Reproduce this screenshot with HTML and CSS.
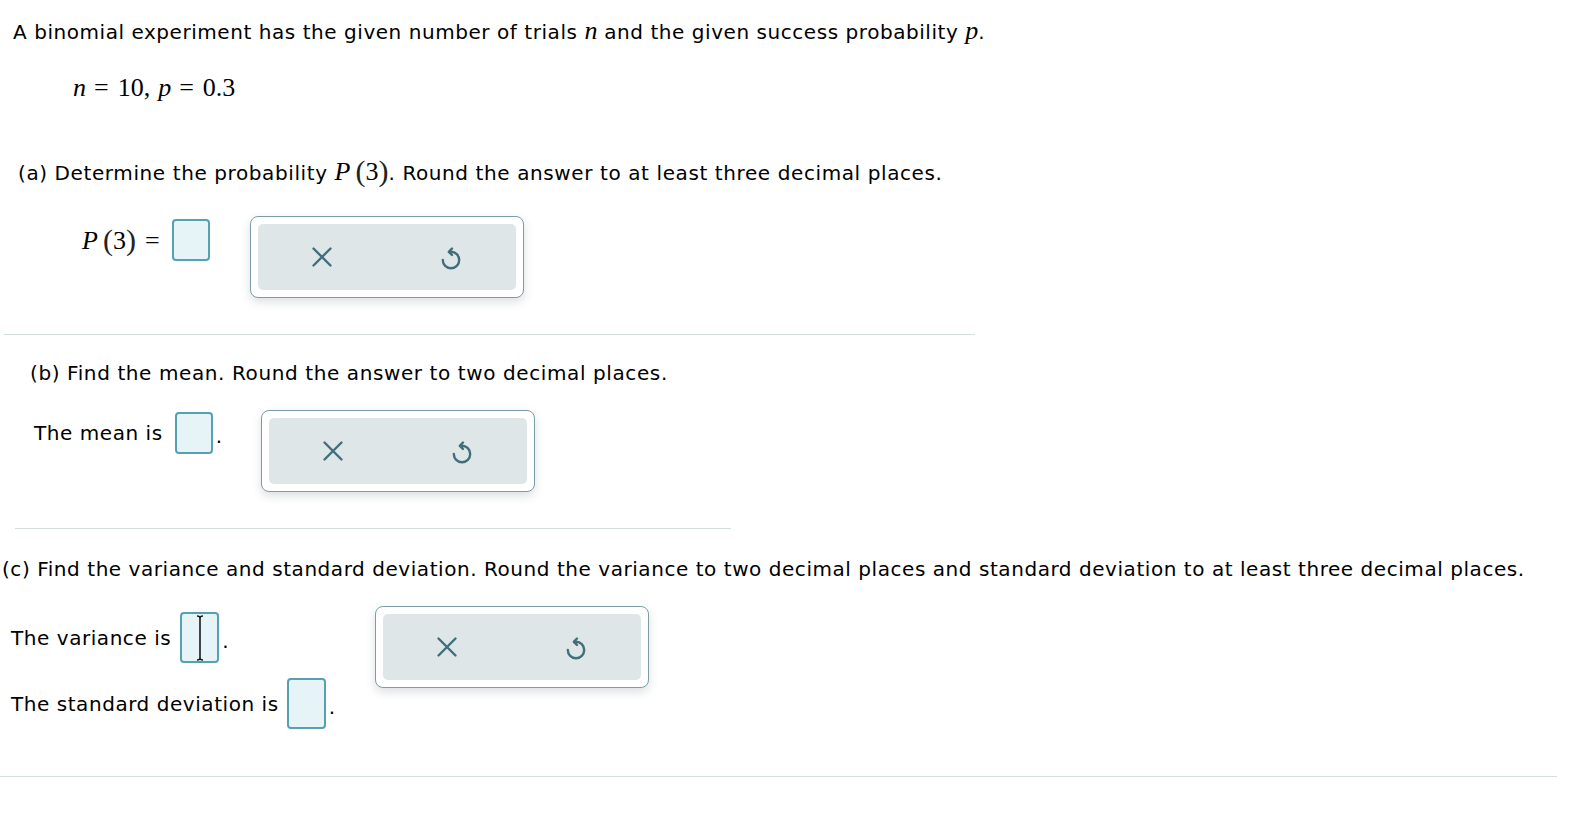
FILE: index.html
```html
<!DOCTYPE html>
<html lang="en">
<head>
<meta charset="utf-8">
<title>Binomial experiment</title>
<link rel="stylesheet" href="styles.css">
</head>
<body>
<div class="page">
  <p class="intro">A binomial experiment has the given number of trials <i class="mv">n</i> and the given success probability <i class="mv">p</i>.</p>
  <div class="given"><i>n</i><span class="rel">=</span>10,<span class="sp"></span><i>p</i><span class="rel">=</span>0.3</div>

  <p class="q q-a">(a) Determine the probability <span class="m"><i>P</i><span class="paren">(</span>3<span class="paren">)</span></span>. Round the answer to at least three decimal places.</p>
  <div class="row row-a">
    <div class="ans ans-a">
      <span class="m big"><i>P</i><span class="paren">(</span>3<span class="paren">)</span><span class="rel">=</span></span>
      <span class="box"></span>
    </div>
    <div class="tools">
      <div class="tools-in">
        <span class="tbtn"><svg width="24" height="24" viewBox="0 0 24 24"><path d="M3.5 3.5 L20.5 20.5 M20.5 3.5 L3.5 20.5" /></svg></span>
        <span class="tbtn"><svg width="24" height="26" viewBox="0 0 24 26"><path d="M3.8 16 A8.2 8.2 0 1 0 12 7.8 H10.5 M13 4.5 L9.8 7.8 L13 11" /></svg></span>
      </div>
    </div>
  </div>
  <div class="rule rule-1"></div>

  <p class="q q-b">(b) Find the mean. Round the answer to two decimal places.</p>
  <div class="row row-b">
    <div class="ans ans-b">
      <span>The mean is</span><span class="box"></span><span class="dot">.</span>
    </div>
    <div class="tools">
      <div class="tools-in">
        <span class="tbtn"><svg width="24" height="24" viewBox="0 0 24 24"><path d="M3.5 3.5 L20.5 20.5 M20.5 3.5 L3.5 20.5" /></svg></span>
        <span class="tbtn"><svg width="24" height="26" viewBox="0 0 24 26"><path d="M3.8 16 A8.2 8.2 0 1 0 12 7.8 H10.5 M13 4.5 L9.8 7.8 L13 11" /></svg></span>
      </div>
    </div>
  </div>
  <div class="rule rule-2"></div>

  <p class="q q-c">(c) Find the variance and standard deviation. Round the variance to two decimal places and standard deviation to at least three decimal places.</p>
  <div class="row row-c">
    <div class="ans-col">
      <div class="ans ans-var">
        <span>The variance is</span><span class="box box-tall"><svg class="ibeam" width="10" height="48" viewBox="0 0 10 48"><path d="M2 2 Q5 2 5 4 Q5 2 8 2 M5 4 V44 M2 46 Q5 46 5 44 Q5 46 8 46" /></svg></span><span class="dot">.</span>
      </div>
      <div class="ans ans-sd">
        <span>The standard deviation is</span><span class="box box-tall"></span><span class="dot">.</span>
      </div>
    </div>
    <div class="tools">
      <div class="tools-in">
        <span class="tbtn"><svg width="24" height="24" viewBox="0 0 24 24"><path d="M3.5 3.5 L20.5 20.5 M20.5 3.5 L3.5 20.5" /></svg></span>
        <span class="tbtn"><svg width="24" height="26" viewBox="0 0 24 26"><path d="M3.8 16 A8.2 8.2 0 1 0 12 7.8 H10.5 M13 4.5 L9.8 7.8 L13 11" /></svg></span>
      </div>
    </div>
  </div>
  <div class="rule rule-3"></div>
</div>
</body>
</html>
```

FILE: styles.css
```css
html, body {
  margin: 0;
  padding: 0;
  background: #fff;
}

body {
  font-family: "DejaVu Sans", Verdana, sans-serif;
  font-size: 20px;
  letter-spacing: 0.6px;
  color: #000;
}

.page {
  display: flex;
  flex-direction: column;
  align-items: flex-start;
}

p { margin: 0; }

.intro {
  padding: 20px 0 0 13px;
  line-height: 24px;
  letter-spacing: 0.55px;
}

.mv {
  font-family: "Liberation Serif", "Times New Roman", serif;
  font-size: 26px;
  line-height: 20px;
  letter-spacing: 0;
}

.given {
  margin: 29px 0 0 73px;
  font-family: "Liberation Serif", "Times New Roman", serif;
  font-size: 26px;
  line-height: 30px;
  letter-spacing: 0;
}

.given .rel {
  padding: 0 9px 0 8px;
}

.sp {
  display: inline-block;
  width: 8px;
}

.rel {
  padding: 0 6px;
}

.m {
  font-family: "Liberation Serif", "Times New Roman", serif;
  font-size: 26px;
  line-height: 20px;
  letter-spacing: 0;
}

.m i { padding-right: 5px; }

.paren {
  font-size: 30px;
  color: #222;
  position: relative;
  top: 1px;
}

.q {
  line-height: 30px;
}

.q-a { margin: 55px 0 0 18px; }
.q-b { margin: 23px 0 0 30px; }
.q-c { margin: 25px 0 0 2px; letter-spacing: 0.55px; }

.row {
  display: flex;
  align-items: flex-start;
}

.row-a { margin: 28px 0 0 82px; gap: 40px; }
.row-b { margin: 22px 0 0 34px; gap: 38px; }
.row-c { margin: 22px 0 0 11px; gap: 39px; letter-spacing: 0.55px; }

.ans {
  display: flex;
  align-items: center;
}

.ans-a { margin-top: 3px; gap: 6px; }
.ans-a .rel { padding: 0 6px 0 9px; }
.ans-b { margin-top: 2px; letter-spacing: 0.55px; }

.ans-b > span:first-child { margin-right: 12px; }
.ans-var > span:first-child { margin-right: 9px; }
.ans-sd > span:first-child { margin-right: 8px; }

.box {
  display: inline-flex;
  align-items: center;
  justify-content: center;
  box-sizing: border-box;
  width: 38px;
  height: 42px;
  border: 2px solid #55a1b0;
  border-radius: 4px;
  background: #e6f4f8;
}

.box-tall {
  height: 51px;
  width: 39px;
}

.ibeam path {
  fill: none;
  stroke: #1a1a1a;
  stroke-width: 1.6;
}

.dot {
  margin-left: 3px;
  align-self: center;
  padding-top: 6px;
}

.ans-col {
  display: flex;
  flex-direction: column;
  gap: 15px;
  margin-top: 6px;
}

.tools {
  box-sizing: border-box;
  width: 274px;
  height: 82px;
  padding: 7px;
  border: 1px solid #7d9da6;
  border-radius: 8px;
  background: #fff;
  box-shadow: 0 4px 10px rgba(60, 80, 90, 0.18);
}

.tools-in {
  display: flex;
  height: 100%;
  border-radius: 5px;
  background: #dfe6e8;
}

.tbtn {
  flex: 1;
  display: flex;
  align-items: center;
  justify-content: center;
}

.tbtn svg path {
  fill: none;
  stroke: #3e6f7b;
  stroke-width: 2.4;
  stroke-linecap: round;
  stroke-linejoin: round;
}

.rule {
  height: 1px;
  background: #d3dede;
}

.rule-1 { margin: 36px 0 0 4px; width: 971px; }
.rule-2 { margin: 36px 0 0 15px; width: 716px; }
.rule-3 { margin: 47px 0 0 0; width: 1557px; }
```
